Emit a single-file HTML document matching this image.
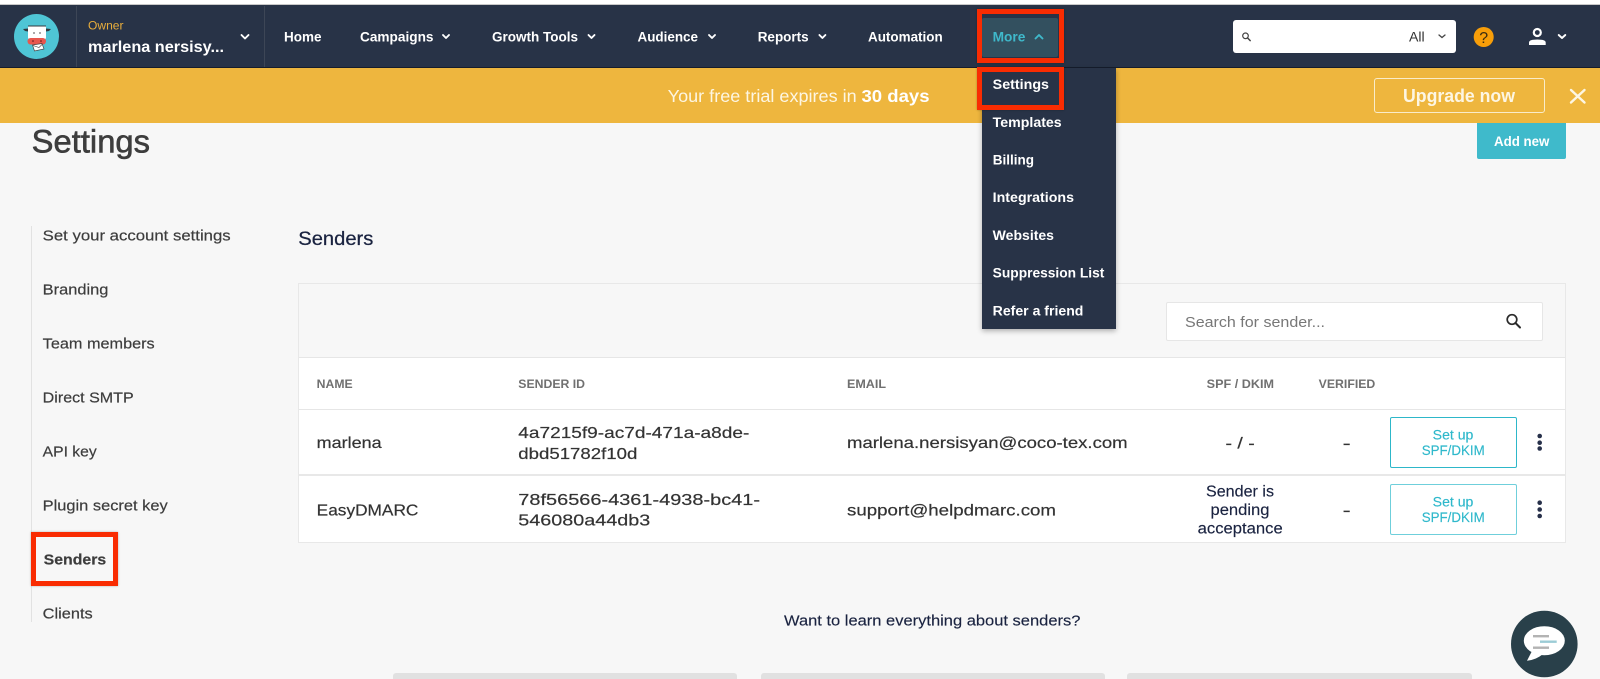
<!DOCTYPE html>
<html lang="en">
<head>
<meta charset="utf-8">
<title>Settings - Senders</title>
<style>
html,body{margin:0;padding:0;width:1600px;height:679px;overflow:hidden;background:#f7f7f7}
.b{position:absolute;box-sizing:border-box}
svg{position:absolute;left:0;top:0}
text{font-family:"Liberation Sans",sans-serif;white-space:pre}
.nav{font-size:13.5px;font-weight:700;fill:#fff}
.dd{font-size:13.5px;font-weight:700;fill:#fff}
.side{font-size:15px;fill:#3d3d3d;stroke:#3d3d3d;stroke-width:.2px}
.th{font-size:11.5px;font-weight:700;fill:#707070}
.td{font-size:16px;fill:#333;stroke:#333;stroke-width:.2px}
.nv{font-size:15.5px;fill:#1a2340;stroke:#1a2340;stroke-width:.15px}
.btn{font-size:13.5px;fill:#2eb8cb;stroke:#2eb8cb;stroke-width:.15px}
.ch{fill:none;stroke:#fff;stroke-width:1.9;stroke-linecap:round;stroke-linejoin:round}
</style>
</head>
<body>
<!-- top strip -->
<div class="b" style="left:0;top:0;width:1600px;height:5px;background:#fff;border-bottom:1px solid #c9c9c9"></div>
<!-- nav -->
<div class="b" style="left:0;top:5px;width:1600px;height:63px;background:#283347;border-bottom:1px solid #161d2c"></div>
<div class="b" style="left:76px;top:6px;width:1px;height:61px;background:#3d4656"></div>
<div class="b" style="left:264px;top:6px;width:1px;height:61px;background:#3d4656"></div>
<!-- banner -->
<div class="b" style="left:0;top:68px;width:1600px;height:55px;background:#eeb63e"></div>
<div class="b" style="left:1374px;top:78px;width:171px;height:35px;border:1.500px solid #f9ecc9;border-radius:3px"></div>
<!-- more -->
<div class="b" style="left:982px;top:18px;width:76px;height:39px;background:#33505f;border-radius:2px"></div>
<!-- add new -->
<div class="b" style="left:1477px;top:123px;width:89px;height:36px;background:#3fbacb;border-radius:0 0 2px 2px"></div>
<!-- search -->
<div class="b" style="left:1233px;top:20px;width:223px;height:33px;background:#fff;border-radius:3px"></div>
<!-- sidebar line -->
<div class="b" style="left:31px;top:226px;width:1px;height:396px;background:#e2e2e2"></div>
<!-- table -->
<div class="b" style="left:298px;top:283px;width:1268px;height:260px;background:#fff;border:1px solid #e8e8e8"></div>
<div class="b" style="left:299px;top:284px;width:1266px;height:74px;background:#f7f7f7;border-bottom:1px solid #e6e6e6"></div>
<div class="b" style="left:299px;top:409px;width:1266px;height:1px;background:#e6e6e6"></div>
<div class="b" style="left:299px;top:474px;width:1266px;height:2px;background:#e8e8e8"></div>
<div class="b" style="left:1166px;top:302px;width:377px;height:39px;background:#fff;border:1px solid #e6e6e6;border-radius:2px"></div>
<div class="b" style="left:1390px;top:417px;width:127px;height:51px;border:1px solid #2db7c9;border-radius:2px;background:#fff"></div>
<div class="b" style="left:1390px;top:484px;width:127px;height:51px;border:1px solid #6fcfdb;border-radius:2px;background:#fff"></div>
<!-- bottom cards -->
<div class="b" style="left:393px;top:673px;width:344px;height:6px;background:#e1e1e1;border-radius:3px 3px 0 0"></div>
<div class="b" style="left:761px;top:673px;width:344px;height:6px;background:#e1e1e1;border-radius:3px 3px 0 0"></div>
<div class="b" style="left:1127px;top:673px;width:345px;height:6px;background:#e1e1e1;border-radius:3px 3px 0 0"></div>
<!-- dropdown -->
<div class="b" style="left:981.500px;top:68px;width:134px;height:261px;background:#283347;box-shadow:0 2px 5px rgba(0,0,0,.3)"></div>
<!-- red annotation boxes -->
<div class="b" style="left:977px;top:9px;width:87px;height:53.500px;border:5px solid #f92c02;box-shadow:0 0 2px rgba(0,0,0,.3)"></div>
<div class="b" style="left:976.500px;top:67px;width:87.500px;height:43px;border:5.300px solid #f92c02;box-shadow:0 0 2px rgba(0,0,0,.3)"></div>
<div class="b" style="left:31px;top:532px;width:87px;height:54px;border:5px solid #f92c02;box-shadow:0 0 2px rgba(0,0,0,.3)"></div>

<svg width="1600" height="679" viewBox="0 0 1600 679" xmlns="http://www.w3.org/2000/svg">
<!-- logo -->
<circle cx="36.500" cy="36.500" r="22.500" fill="#4fc5d5"/>
<path d="M28 28.500 L23 29 L25 31 L28 31.500Z M46 28.500 L51 29 L49 31 L46 31.500Z" fill="#33393f"/>
<rect x="28" y="26" width="18" height="13" rx="1.500" fill="#fff"/>
<rect x="28" y="25.500" width="18" height="1" fill="#33393f"/>
<rect x="33.500" y="32" width="1" height="2" fill="#555"/><rect x="39.500" y="32" width="1" height="2" fill="#555"/>
<rect x="27.500" y="38" width="18.500" height="6.500" rx="3.200" fill="#e8574e"/>
<circle cx="33" cy="41" r=".8" fill="#5a1a18"/><circle cx="41" cy="41" r=".8" fill="#5a1a18"/>
<path d="M32.500 45 L42 43.500 L44 49 L34.500 51Z" fill="#fff" stroke="#444" stroke-width=".7"/>
<path d="M33 45.500 L39 47.500 L42.500 44" fill="none" stroke="#444" stroke-width=".6"/>

<!-- owner -->
<text x="88" y="29.500" font-size="12" fill="#e9ae3c" textLength="35.500" lengthAdjust="spacingAndGlyphs">Owner</text>
<text x="88" y="52" font-size="15.500" font-weight="700" fill="#fff" textLength="136" lengthAdjust="spacingAndGlyphs">marlena nersisy...</text>
<path class="ch" d="M241.500 35 L245 38.500 L248.500 35"/>

<!-- nav -->
<text class="nav" x="284" y="41.500" textLength="37.500" lengthAdjust="spacingAndGlyphs">Home</text>
<text class="nav" x="360" y="41.500" textLength="73.500" lengthAdjust="spacingAndGlyphs">Campaigns</text>
<path class="ch" d="M443 35 L446 38 L449 35"/>
<text class="nav" x="492" y="41.500" textLength="86" lengthAdjust="spacingAndGlyphs">Growth Tools</text>
<path class="ch" d="M588.500 35 L591.500 38 L594.500 35"/>
<text class="nav" x="637.500" y="41.500" textLength="60.500" lengthAdjust="spacingAndGlyphs">Audience</text>
<path class="ch" d="M709 35 L712 38 L715 35"/>
<text class="nav" x="757.700" y="41.500" textLength="51" lengthAdjust="spacingAndGlyphs">Reports</text>
<path class="ch" d="M819.400 35 L822.400 38 L825.400 35"/>
<text class="nav" x="868" y="41.500" textLength="74.700" lengthAdjust="spacingAndGlyphs">Automation</text>
<text x="992.600" y="41.500" font-size="13.500" font-weight="700" fill="#3fb9cb" textLength="32.800" lengthAdjust="spacingAndGlyphs">More</text>
<path d="M1035.500 38.500 L1039 35 L1042.500 38.500" fill="none" stroke="#3fb9cb" stroke-width="1.900" stroke-linecap="round" stroke-linejoin="round"/>

<!-- search / right -->
<circle cx="1245.500" cy="35.800" r="2.800" fill="none" stroke="#444" stroke-width="1.200"/>
<path d="M1247.500 37.900 L1250.200 40.600" stroke="#444" stroke-width="1.500" stroke-linecap="round"/>
<text x="1409" y="41.500" font-size="14" fill="#333" textLength="15.700" lengthAdjust="spacingAndGlyphs">All</text>
<path d="M1439 35 L1442 37.500 L1445 35" fill="none" stroke="#444" stroke-width="1.300" stroke-linecap="round"/>
<circle cx="1483.700" cy="37" r="10" fill="#f89e09"/>
<text x="1483.700" y="42.800" font-size="16" fill="#3b2c10" text-anchor="middle">?</text>
<circle cx="1537.300" cy="32.500" r="3.500" fill="none" stroke="#fff" stroke-width="2.200"/>
<path d="M1529 45 L1529 42.500 Q1529 39.500 1537.300 39.500 Q1545.700 39.500 1545.700 42.500 L1545.700 45Z" fill="#fff"/>
<path class="ch" d="M1558.700 35 L1562 38 L1565.300 35"/>

<!-- banner text -->
<text x="667.700" y="102" font-size="17.500" fill="#fdf6e3" textLength="189" lengthAdjust="spacingAndGlyphs">Your free trial expires in</text>
<text x="861.500" y="102" font-size="17.500" font-weight="700" fill="#fff" textLength="68" lengthAdjust="spacingAndGlyphs">30 days</text>
<text x="1403" y="102" font-size="18" font-weight="700" fill="#fdf6e3" textLength="112" lengthAdjust="spacingAndGlyphs">Upgrade now</text>
<path d="M1571 90 L1584.500 102.500 M1584.500 90 L1571 102.500" stroke="#fdf6e3" stroke-width="2.400" stroke-linecap="round"/>

<!-- dropdown -->
<text class="dd" x="992.700" y="89" textLength="56.300" lengthAdjust="spacingAndGlyphs">Settings</text>
<text class="dd" x="992.700" y="127" textLength="69" lengthAdjust="spacingAndGlyphs">Templates</text>
<text class="dd" x="992.700" y="164.500" textLength="41.300" lengthAdjust="spacingAndGlyphs">Billing</text>
<text class="dd" x="992.700" y="202" textLength="81.300" lengthAdjust="spacingAndGlyphs">Integrations</text>
<text class="dd" x="992.700" y="240" textLength="61.300" lengthAdjust="spacingAndGlyphs">Websites</text>
<text class="dd" x="992.700" y="277.500" textLength="111.700" lengthAdjust="spacingAndGlyphs">Suppression List</text>
<text class="dd" x="992.700" y="315.500" textLength="90.700" lengthAdjust="spacingAndGlyphs">Refer a friend</text>

<!-- heading -->
<text x="31.700" y="152.700" font-size="32" fill="#3d3d3d" stroke="#3d3d3d" stroke-width=".6" textLength="118.300" lengthAdjust="spacingAndGlyphs">Settings</text>
<text x="1494" y="146" font-size="14" font-weight="700" fill="#fff" textLength="55.400" lengthAdjust="spacingAndGlyphs">Add new</text>

<!-- sidebar -->
<text class="side" x="42.700" y="240.500" textLength="188" lengthAdjust="spacingAndGlyphs">Set your account settings</text>
<text class="side" x="42.700" y="294.500" textLength="65.700" lengthAdjust="spacingAndGlyphs">Branding</text>
<text class="side" x="42.700" y="348.500" textLength="112" lengthAdjust="spacingAndGlyphs">Team members</text>
<text class="side" x="42.700" y="402.500" textLength="91" lengthAdjust="spacingAndGlyphs">Direct SMTP</text>
<text class="side" x="42.700" y="456.500" textLength="54" lengthAdjust="spacingAndGlyphs">API key</text>
<text class="side" x="42.700" y="510.500" textLength="125" lengthAdjust="spacingAndGlyphs">Plugin secret key</text>
<text class="side" x="43.700" y="564.500" font-weight="700" textLength="62.500" lengthAdjust="spacingAndGlyphs">Senders</text>
<text class="side" x="42.700" y="618.500" textLength="50" lengthAdjust="spacingAndGlyphs">Clients</text>

<!-- table -->
<text x="298.300" y="245" font-size="19" fill="#1a2340" stroke="#1a2340" stroke-width=".25" textLength="75" lengthAdjust="spacingAndGlyphs">Senders</text>
<text x="1185" y="327" font-size="15" fill="#777" textLength="140" lengthAdjust="spacingAndGlyphs">Search for sender...</text>
<circle cx="1512" cy="319.500" r="4.800" fill="none" stroke="#2b2b2b" stroke-width="1.700"/>
<path d="M1515.500 323 L1520 327.500" stroke="#2b2b2b" stroke-width="2" stroke-linecap="round"/>

<text class="th" x="316.700" y="388.200" textLength="36" lengthAdjust="spacingAndGlyphs">NAME</text>
<text class="th" x="518.300" y="388.200" textLength="66.700" lengthAdjust="spacingAndGlyphs">SENDER ID</text>
<text class="th" x="847" y="388.200" textLength="39" lengthAdjust="spacingAndGlyphs">EMAIL</text>
<text class="th" x="1206.700" y="388.200" textLength="67.300" lengthAdjust="spacingAndGlyphs">SPF / DKIM</text>
<text class="th" x="1318.700" y="388.200" textLength="56.600" lengthAdjust="spacingAndGlyphs">VERIFIED</text>

<text class="td" x="316.700" y="448" textLength="65" lengthAdjust="spacingAndGlyphs">marlena</text>
<text class="td" x="518.300" y="438" textLength="231" lengthAdjust="spacingAndGlyphs">4a7215f9-ac7d-471a-a8de-</text>
<text class="td" x="518.300" y="459" textLength="119" lengthAdjust="spacingAndGlyphs">dbd51782f10d</text>
<text class="td" x="847" y="448" textLength="280.600" lengthAdjust="spacingAndGlyphs">marlena.nersisyan@coco-tex.com</text>
<text class="td" x="1225.500" y="448.500" textLength="29.300" lengthAdjust="spacingAndGlyphs">- / -</text>
<text class="td" x="1342.700" y="448.500" textLength="8" lengthAdjust="spacingAndGlyphs">-</text>

<text class="td" x="316.700" y="515.500" textLength="101.700" lengthAdjust="spacingAndGlyphs">EasyDMARC</text>
<text class="td" x="518.300" y="505" textLength="241.700" lengthAdjust="spacingAndGlyphs">78f56566-4361-4938-bc41-</text>
<text class="td" x="518.300" y="525.500" textLength="132" lengthAdjust="spacingAndGlyphs">546080a44db3</text>
<text class="td" x="847" y="515.500" textLength="209" lengthAdjust="spacingAndGlyphs">support@helpdmarc.com</text>
<text class="nv" x="1206" y="496.500" textLength="68" lengthAdjust="spacingAndGlyphs">Sender is</text>
<text class="nv" x="1210.500" y="515" textLength="59" lengthAdjust="spacingAndGlyphs">pending</text>
<text class="nv" x="1197.700" y="533.500" textLength="85" lengthAdjust="spacingAndGlyphs">acceptance</text>
<text class="td" x="1342.700" y="515.500" textLength="8" lengthAdjust="spacingAndGlyphs">-</text>

<text class="btn" x="1432.700" y="439.700" textLength="40.700" lengthAdjust="spacingAndGlyphs">Set up</text>
<text class="btn" x="1421.700" y="455" textLength="63" lengthAdjust="spacingAndGlyphs">SPF/DKIM</text>
<text class="btn" x="1432.700" y="506.400" textLength="40.700" lengthAdjust="spacingAndGlyphs">Set up</text>
<text class="btn" x="1421.700" y="522" textLength="63" lengthAdjust="spacingAndGlyphs">SPF/DKIM</text>

<g fill="#27304a">
<circle cx="1539.700" cy="436" r="2.300"/><circle cx="1539.700" cy="442.700" r="2.300"/><circle cx="1539.700" cy="448.500" r="2.300"/>
<circle cx="1539.700" cy="502.700" r="2.300"/><circle cx="1539.700" cy="509.500" r="2.300"/><circle cx="1539.700" cy="516" r="2.300"/>
</g>

<text x="784" y="625.500" font-size="15" fill="#1a2340" stroke="#1a2340" stroke-width=".15" textLength="296.400" lengthAdjust="spacingAndGlyphs">Want to learn everything about senders?</text>

<!-- chat -->
<circle cx="1544.300" cy="644" r="33.300" fill="#29404a"/>
<ellipse cx="1544.300" cy="640.700" rx="20.500" ry="14.500" fill="#fff"/>
<path d="M1532 651 L1527 660.700 Q1536 660 1543 654Z" fill="#fff"/>
<rect x="1533" y="635" width="16" height="2.400" fill="#b3b3b3"/>
<rect x="1540" y="640.500" width="16.700" height="2.400" fill="#9cccd6"/>
<rect x="1533" y="646.500" width="16" height="2.400" fill="#b3b3b3"/>
</svg>
</body>
</html>
